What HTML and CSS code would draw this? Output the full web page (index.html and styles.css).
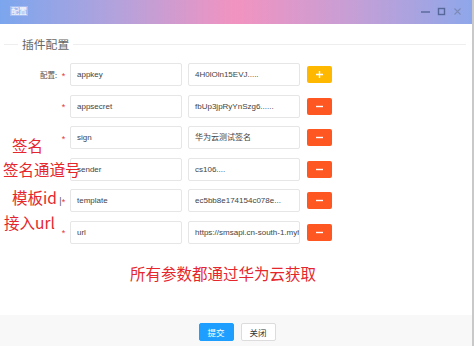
FILE: index.html
```html
<!DOCTYPE html>
<html lang="zh">
<head>
<meta charset="utf-8">
<link rel="stylesheet" href="styles.css">
</head>
<body>
<div class="win">
  <div class="titlebar">
    <span class="title">配置</span>
    <div class="ctrls">
      <svg width="9" height="9" viewBox="0 0 9 9"><path d="M0 5h9" stroke="#56679a" stroke-width="1.4"/></svg>
      <svg width="9" height="9" viewBox="0 0 9 9"><rect x="1.5" y="1.5" width="6" height="6" fill="none" stroke="#56679a" stroke-width="1.4"/></svg>
      <svg width="9" height="9" viewBox="0 0 9 9"><path d="M1.5 1.5l6 6M7.5 1.5l-6 6" stroke="#7c8ab8" stroke-width="1.1"/></svg>
    </div>
  </div>
  <div class="content">
    <div class="legend"><span class="line short"></span><span class="legend-text">插件配置</span><span class="line"></span></div>
    <div class="form">
      <div class="row">
        <label class="lbl">配置:</label><span class="req">*</span>
        <div class="inp">appkey</div><div class="inp">4H0lOln15EVJ.....</div>
        <button class="btn add"><svg width="7" height="7" viewBox="0 0 7 7"><path d="M0 3.5h7M3.5 0v7" stroke="#fff" stroke-width="1.4"/></svg></button>
      </div>
      <div class="row">
        <label class="lbl"></label><span class="req">*</span>
        <div class="inp">appsecret</div><div class="inp">fbUp3jpRyYnSzg6......</div>
        <button class="btn del"><svg width="7" height="7" viewBox="0 0 7 7"><path d="M0 3.5h7" stroke="#fff" stroke-width="1.4"/></svg></button>
      </div>
      <div class="row">
        <label class="lbl"></label><span class="req">*</span>
        <div class="inp">sign</div><div class="inp">华为云测试签名</div>
        <button class="btn del"><svg width="7" height="7" viewBox="0 0 7 7"><path d="M0 3.5h7" stroke="#fff" stroke-width="1.4"/></svg></button>
      </div>
      <div class="row">
        <label class="lbl"></label><span class="req">*</span>
        <div class="inp">sender</div><div class="inp">cs106....</div>
        <button class="btn del"><svg width="7" height="7" viewBox="0 0 7 7"><path d="M0 3.5h7" stroke="#fff" stroke-width="1.4"/></svg></button>
      </div>
      <div class="row">
        <label class="lbl"></label><span class="req">*</span>
        <div class="inp">template</div><div class="inp">ec5bb8e174154c078e...</div>
        <button class="btn del"><svg width="7" height="7" viewBox="0 0 7 7"><path d="M0 3.5h7" stroke="#fff" stroke-width="1.4"/></svg></button>
      </div>
      <div class="row">
        <label class="lbl"></label><span class="req">*</span>
        <div class="inp">url</div><div class="inp">https://smsapi.cn-south-1.myhuaweicloud.com</div>
        <button class="btn del"><svg width="7" height="7" viewBox="0 0 7 7"><path d="M0 3.5h7" stroke="#fff" stroke-width="1.4"/></svg></button>
      </div>
    </div>
  </div>
  <div class="footer">
    <button class="fbtn primary">提交</button>
    <button class="fbtn">关闭</button>
  </div>
</div>
<div class="annot a1">签名</div>
<div class="annot a2">签名通道号</div>
<div class="annot a3">模板id <span class="cursor">|</span></div>
<div class="annot a4">接入url</div>
<div class="annot a5">所有参数都通过华为云获取</div>
</body>
</html>
```

FILE: styles.css
```css
* { box-sizing: border-box; }
html, body { margin: 0; padding: 0; }
body {
  width: 474px;
  height: 346px;
  overflow: hidden;
  position: relative;
  background: #fff;
  font-family: "Liberation Sans", "Noto Sans CJK SC", sans-serif;
}
.win {
  width: 474px;
  height: 346px;
  display: flex;
  flex-direction: column;
  border-right: 2px solid #c9c9c9;
}
.titlebar {
  height: 24px;
  flex: none;
  display: flex;
  align-items: center;
  justify-content: space-between;
  padding: 0 10px 0 10px;
  background: linear-gradient(90deg, #7ba6ee 0%, #b4a2dc 25%, #f293c0 50%, #c59fd6 75%, #8ea7ea 100%);
}
.title {
  font-family: "Noto Sans CJK SC", sans-serif;
  font-size: 8px;
  line-height: 10px;
  color: #fff;
  background: rgba(255,255,255,0.25);
  padding: 0 1px;
  margin-top: -2px;
}
.ctrls {
  display: flex;
  gap: 7px;
  align-items: center;
  margin-top: -2px;
}
.content {
  flex: 1;
  padding: 14px 6px 0 4px;
}
.legend {
  display: flex;
  align-items: center;
  height: 12px;
}
.line {
  flex: 1;
  height: 1px;
  background: #eee;
}
.line.short { flex: none; width: 14px; }
.legend-text {
  font-family: "Noto Sans CJK SC", sans-serif;
  font-size: 11.8px;
  color: #666;
  padding: 0 4px;
  line-height: 12px;
}
.form {
  margin-top: 13px;
  display: flex;
  flex-direction: column;
  gap: 8.5px;
}
.row {
  display: flex;
  align-items: center;
  height: 23px;
}
.lbl {
  width: 53px;
  text-align: right;
  font-family: "Noto Sans CJK SC", sans-serif;
  font-size: 7.5px;
  color: #555;
}
.req {
  width: 13px;
  text-align: center;
  color: #e4393c;
  font-size: 9px;
  margin-top: 2px;
}
.inp {
  width: 112px;
  height: 23px;
  border: 1px solid #e6e6e6;
  border-radius: 2px;
  background: #fff;
  font-size: 8px;
  line-height: 21px;
  color: #444;
  padding: 0 6px;
  white-space: nowrap;
  overflow: hidden;
}
.inp + .inp { margin-left: 6px; }
.btn {
  margin-left: 7px;
  width: 25px;
  height: 17px;
  border: none;
  border-radius: 2px;
  padding: 0;
  display: flex;
  align-items: center;
  justify-content: center;
}
.btn.add { background: #ffb800; }
.btn.del { background: #ff5722; }
.footer {
  height: 31px;
  flex: none;
  background: #f8f8f8;
  display: flex;
  justify-content: center;
  align-items: center;
  gap: 7px;
  padding-top: 2px;
  padding-left: 2px;
}
.fbtn {
  width: 35px;
  height: 18px;
  padding: 0;
  border: 1px solid #dcdcdc;
  border-radius: 2px;
  background: #fff;
  color: #333;
  font-family: "Noto Sans CJK SC", sans-serif;
  font-size: 8.5px;
}
.fbtn.primary {
  background: #1e9fff;
  border-color: #1e9fff;
  color: #fff;
}
.annot {
  position: absolute;
  font-family: "Noto Sans CJK SC", sans-serif;
  font-weight: 400;
  font-size: 15.5px;
  line-height: 16px;
  color: #e5262c;
  white-space: nowrap;
}
.a1 { left: 12px; top: 137px; }
.a2 { left: 3px; top: 161px; }
.a3 { left: 12px; top: 189px; }
.a4 { left: 4px; top: 214px; }
.a5 { left: 130px; top: 265px; }
.cursor { color: #555; font-weight: 400; font-size: 9px; font-family: "Liberation Sans", sans-serif; margin-left: -1px; }
```
